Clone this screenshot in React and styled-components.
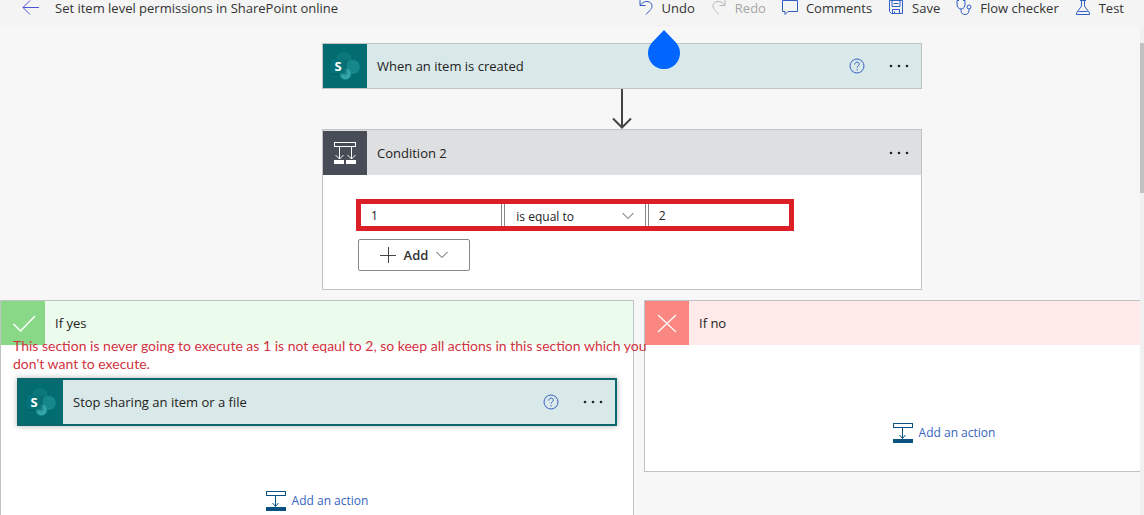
import React from 'react';
import styled, { createGlobalStyle } from 'styled-components';

const toolbarItems = [
  { label: 'Undo', icon: 'undo', beacon: true },
  { label: 'Redo', icon: 'redo', disabled: true },
  { label: 'Comments', icon: 'comment' },
  { label: 'Save', icon: 'save' },
  { label: 'Flow checker', icon: 'stethoscope' },
  { label: 'Test', icon: 'flask' },
];

const toolbarPaths = {
  undo: <path d="M2 0v5.5h5.5M2.3 5.2C4 2.500 6.5 1.500 9 1.500c3 0 5 2 5 4.7 0 1.8-1 3-2.2 4.2L8 14.5" />,
  redo: <path d="M14 0v5.5H8.5M13.7 5.2C12 2.500 9.5 1.500 7 1.500c-3 0-5 2-5 4.7 0 1.8 1 3 2.2 4.2L8 14.5" />,
  comment: <path d="M.5 .5h15v11H6l-3 3v-3H.5z" />,
  save: (
    <>
      <path d="M1.500 .5h13v13h-11l-2-2zM4 .5v6h8v-6M4.500 13.500v-4h7v4M6.500 13.500v-2" />
      <path d="M5.500 3.500h5" />
    </>
  ),
  stethoscope: (
    <>
      <path d="M3 .5H1V4c0 3 1.500 5 4 5s4-2 4-5V.5H7M5 9v1.500c0 2.500 1.500 4 4 4s4-1.500 4-4V9" />
      <circle cx="13" cy="7" r="2" />
    </>
  ),
  flask: <path d="M5 .5h6M6.5 .5V6L1.5 13v1.5h13V13L9.5 6V.5M3.500 11.500h9" />,
};

const ToolbarIcon = ({ name }) => (
  <Glyph width="16" height="16" viewBox="0 0 16 16">{toolbarPaths[name]}</Glyph>
);

const BackIcon = () => (
  <Glyph width="18" height="16" viewBox="0 0 18 16">
    <path d="M17 7.500H1M8 .5l-7 7 7 7" />
  </Glyph>
);

const SharePointIcon = () => (
  <svg width="44" height="44" viewBox="0 0 44 44" aria-hidden="true">
    <circle cx="21" cy="16" r="8" fill="#0a777a" />
    <circle cx="30" cy="23" r="7" fill="#16878b" />
    <circle cx="22.5" cy="30" r="5.5" fill="#33a5aa" />
    <rect x="10" y="16" width="14" height="15" fill="#04595c" opacity="0.4" />
    <rect x="8" y="15" width="14" height="14" rx="1" fill="#047276" />
    <text x="15" y="27" textAnchor="middle" fontFamily="Open Sans, sans-serif" fontSize="13" fontWeight="700" fill="#fff">S</text>
  </svg>
);

const ConditionIcon = () => (
  <svg width="44" height="44" viewBox="0 0 44 44" fill="none" stroke="#fff" aria-hidden="true">
    <rect x="11.5" y="11.5" width="21" height="4" />
    <path d="M16.5 16v12M12.5 24l4 4 4-4M28.5 16v12M24.5 24l4 4 4-4" />
    <path d="M11 29h10v4H11zM23 29h10v4H23z" fill="#fff" stroke="none" />
  </svg>
);

const CheckIcon = () => (
  <svg width="44" height="44" viewBox="0 0 44 44" fill="none" stroke="#fff" strokeWidth="1.5" aria-hidden="true">
    <path d="M12.5 23l7 7L34 15" />
  </svg>
);

const CrossIcon = () => (
  <svg width="44" height="44" viewBox="0 0 44 44" fill="none" stroke="#fff" strokeWidth="1.2" aria-hidden="true">
    <path d="M13 14l18 17M31 14L13 31" />
  </svg>
);

const AddActionIcon = () => (
  <svg width="20" height="20" viewBox="0 0 20 20" fill="none" stroke="#0b5283" aria-hidden="true">
    <rect x="0.5" y="0.5" width="19" height="4" />
    <path d="M9.5 5v10.5M6.5 12l3 3.5 3-3.5" />
    <path d="M0 16h20v4H0z" fill="#0b5283" stroke="none" />
  </svg>
);

const HelpButton = () => (
  <IconButton type="button" aria-label="Help">
    <svg width="16" height="16" viewBox="0 0 16 16" fill="none" stroke="#3a62c4" aria-hidden="true">
      <circle cx="8" cy="8" r="7" />
      <path d="M5.8 6.5c0-1.500 1-2.400 2.300-2.400s2.200.8 2.200 2c0 1.700-2.200 1.800-2.200 3.600M8.100 11v1.300" />
    </svg>
  </IconButton>
);

const MoreButton = () => (
  <IconButton type="button" aria-label="More commands">
    <svg width="22" height="16" viewBox="0 0 22 16" fill="#222" aria-hidden="true">
      <circle cx="3" cy="8" r="1.3" />
      <circle cx="11" cy="8" r="1.3" />
      <circle cx="19" cy="8" r="1.3" />
    </svg>
  </IconButton>
);

const Chevron = () => (
  <svg width="12" height="8" viewBox="0 0 12 8" fill="none" stroke="#555" aria-hidden="true">
    <path d="M.5 1L6 6.5 11.5 1" />
  </svg>
);

const AddAction = () => (
  <AddActionButton type="button">
    <AddActionIcon />
    Add an action
  </AddActionButton>
);

const App = () => (
  <Page>
    <GlobalStyle />
    <Header>
      <BackLink href="#back" aria-label="Back"><BackIcon /></BackLink>
      <FlowTitle>Set item level permissions in SharePoint online</FlowTitle>
      <Toolbar>
        {toolbarItems.map(item => (
          <ToolbarButton key={item.label} type="button" disabled={item.disabled}>
            <ToolbarIcon name={item.icon} />
            {item.label}
            {item.beacon && (
              <Beacon width="32" height="39" viewBox="0 0 32 39" aria-hidden="true">
                <path d="M16 0L27.5 12A16 16 0 1 1 4.5 12z" fill="#0066ff" />
              </Beacon>
            )}
          </ToolbarButton>
        ))}
      </Toolbar>
    </Header>

    <Workspace>
      <Canvas>
        <Stage>
          <Card>
            <CardHeader $color="#d9e8e8">
              <IconTile $color="#036c70"><SharePointIcon /></IconTile>
              <CardTitle>When an item is created</CardTitle>
              <HelpButton />
              <MoreButton />
            </CardHeader>
          </Card>

          <Arrow width="20" height="40" viewBox="0 0 20 40" aria-hidden="true">
            <path d="M10 0v38M1 29.5l9 9 9-9" />
          </Arrow>

          <Card>
            <ConditionHeader $color="#dedfe0">
              <IconTile $color="#484c56"><ConditionIcon /></IconTile>
              <CardTitle>Condition 2</CardTitle>
              <MoreButton />
            </ConditionHeader>
            <ConditionBody>
              <ConditionRow>
                <ValueInput aria-label="Left value" defaultValue="1" />
                <OperatorField>
                  <OperatorSelect aria-label="Operator" defaultValue="eq">
                    <option value="eq">is equal to</option>
                    <option value="ne">is not equal to</option>
                  </OperatorSelect>
                  <Chevron />
                </OperatorField>
                <ValueInput aria-label="Right value" defaultValue="2" />
              </ConditionRow>
              <AddButton type="button">
                <svg width="16" height="16" viewBox="0 0 16 16" stroke="#444" aria-hidden="true">
                  <path d="M8.5 0v16M0 8.5h16" />
                </svg>
                Add
                <Chevron />
              </AddButton>
            </ConditionBody>
          </Card>

          <Branches>
            <YesBranch>
              <CardHeader $color="#ebfbec">
                <IconTile $color="#88d888"><CheckIcon /></IconTile>
                <CardTitle>If yes</CardTitle>
              </CardHeader>
              <Note>
                This section is never going to execute as 1 is not eqaul to 2, so keep all actions in this section which you
                <br />
                don't want to execute.
              </Note>
              <YesBody>
                <ActionCard>
                  <CardHeader $color="#d9e8e8">
                    <IconTile $color="#036c70"><SharePointIcon /></IconTile>
                    <CardTitle>Stop sharing an item or a file</CardTitle>
                    <HelpButton />
                    <MoreButton />
                  </CardHeader>
                </ActionCard>
                <AddAction />
              </YesBody>
            </YesBranch>

            <NoBranch>
              <CardHeader $color="#ffeae9">
                <IconTile $color="#fa8781"><CrossIcon /></IconTile>
                <CardTitle>If no</CardTitle>
              </CardHeader>
              <NoBody>
                <AddAction />
              </NoBody>
            </NoBranch>
          </Branches>
        </Stage>
      </Canvas>
      <ScrollTrack><ScrollThumb /></ScrollTrack>
    </Workspace>
  </Page>
);

const GlobalStyle = createGlobalStyle`
  * {
    box-sizing: border-box;
  }

  body {
    margin: 0;
    background: #f7f7f7;
    color: #222;
    font-family: 'Open Sans', 'Noto Sans', sans-serif;
    font-size: 13px;
  }

  button, input, select {
    font-family: inherit;
    font-size: inherit;
    color: inherit;
  }

  svg {
    flex: none;
    display: block;
  }
`;

const Page = styled.div`
  height: 100vh;
  display: flex;
  flex-direction: column;
  overflow: hidden;
`;

const Header = styled.header`
  height: 27px;
  flex: none;
  display: flex;
  align-items: center;
  padding: 0 20px 12px 22px;
  background: #f4f4f4;
`;

const Glyph = styled.svg`
  fill: none;
  stroke: currentColor;
`;

const BackLink = styled.a`
  color: #4a55d8;
`;

const FlowTitle = styled.h1`
  margin: 0 0 0 15px;
  font-size: 13px;
  font-weight: 400;
  line-height: 18px;
  color: #333;
  white-space: nowrap;
`;

const Toolbar = styled.div`
  display: flex;
  gap: 16px;
  margin-left: auto;
`;

const ToolbarButton = styled.button`
  position: relative;
  display: flex;
  align-items: center;
  gap: 8px;
  padding: 0;
  border: 0;
  background: none;
  line-height: 18px;
  white-space: nowrap;
  color: ${props => (props.disabled ? '#a6a6a6' : '#333')};

  ${Glyph} {
    color: ${props => (props.disabled ? '#b8b8b8' : '#2f5fc4')};
  }
`;

const Beacon = styled.svg`
  position: absolute;
  top: 31px;
  left: 10px;
  z-index: 2;
`;

const Workspace = styled.div`
  flex: 1;
  min-height: 0;
  display: flex;
`;

const Canvas = styled.main`
  flex: 1;
  min-width: 0;
  overflow: hidden;
`;

/* the stage runs past the right edge of the canvas */
const Stage = styled.div`
  width: calc(100% + 104px);
  display: flex;
  flex-direction: column;
  align-items: center;
  padding-top: 16px;
`;

const Card = styled.section`
  width: 600px;
  border: 1px solid #bfc3c3;
  background: #fff;
`;

const CardHeader = styled.div`
  display: flex;
  align-items: center;
  padding-right: 11px;
  background: ${props => props.$color};
`;

const ConditionHeader = styled(CardHeader)`
  padding-top: 1px;
`;

const IconTile = styled.div`
  width: 44px;
  height: 44px;
  background: ${props => props.$color};
`;

const CardTitle = styled.h2`
  flex: 1;
  margin: 0 0 0 10px;
  font-size: 13px;
  font-weight: 400;
  line-height: 18px;
`;

const IconButton = styled.button`
  display: flex;
  margin-left: 23px;
  padding: 0;
  border: 0;
  background: none;
`;

const Arrow = styled.svg`
  fill: none;
  stroke: #444;
  stroke-width: 2;
`;

const ConditionBody = styled.div`
  padding: 24px 33px 18px;
`;

const ConditionRow = styled.div`
  max-width: 438px;
  height: 32px;
  display: grid;
  grid-template-columns: repeat(3, 1fr);
  gap: 2px;
  border: 5px solid #dc1f26;
`;

const ValueInput = styled.input`
  min-width: 0;
  padding: 0 10px;
  border: 0 solid #888;
  border-width: 0 1px 0 0;
  background: #fff;
  font-size: 12px;
  outline: 0;

  &:last-child {
    border-width: 0 0 0 1px;
  }
`;

const OperatorField = styled.div`
  display: flex;
  align-items: center;
  padding: 2px 11px 0;
  border: solid #888;
  border-width: 0 1px;
`;

const OperatorSelect = styled.select`
  flex: 1;
  min-width: 0;
  padding: 0;
  border: 0;
  background: none;
  appearance: none;
  font-size: 12px;
`;

const AddButton = styled.button`
  display: flex;
  align-items: center;
  justify-content: center;
  gap: 8px;
  width: 112px;
  height: 32px;
  margin: 8px 0 0 2px;
  border: 1px solid #8a8886;
  border-radius: 2px;
  background: #fff;
  color: #333;
  font-weight: 600;
`;

const Branches = styled.div`
  align-self: stretch;
  display: flex;
  align-items: flex-start;
  gap: 10px;
  margin-top: 10px;
`;

const Branch = styled.section`
  border: 1px solid #bfc3c3;
  background: #fff;
`;

const YesBranch = styled(Branch)`
  position: relative;
  flex: 1;
`;

const NoBranch = styled(Branch)`
  flex: 0 0 600px;
`;

/* red remark written over the branch */
const Note = styled.p`
  position: absolute;
  top: 36px;
  left: 12px;
  z-index: 1;
  margin: 0;
  font-family: Lato, sans-serif;
  font-size: 14px;
  line-height: 18px;
  color: #cf3340;
  white-space: nowrap;
`;

const YesBody = styled.div`
  display: flex;
  flex-direction: column;
  align-items: center;
  gap: 65px;
  padding: 33px 16px 28px;
`;

const NoBody = styled.div`
  display: flex;
  justify-content: center;
  padding: 78px 0 28px;
`;

const ActionCard = styled(Card)`
  border: 2px solid #0c686c;
  box-shadow: 0 0 6px rgba(0, 0, 0, 0.3);
`;

const AddActionButton = styled.button`
  display: flex;
  align-items: center;
  gap: 6px;
  padding: 0;
  border: 0;
  background: none;
  font-size: 12px;
  line-height: 20px;
  color: #3565c0;
`;

const ScrollTrack = styled.div`
  width: 4px;
  padding-top: 16px;
  background: #f1f1f1;
`;

const ScrollThumb = styled.div`
  height: 150px;
  background: #c1c1c1;
`;

export default App;
